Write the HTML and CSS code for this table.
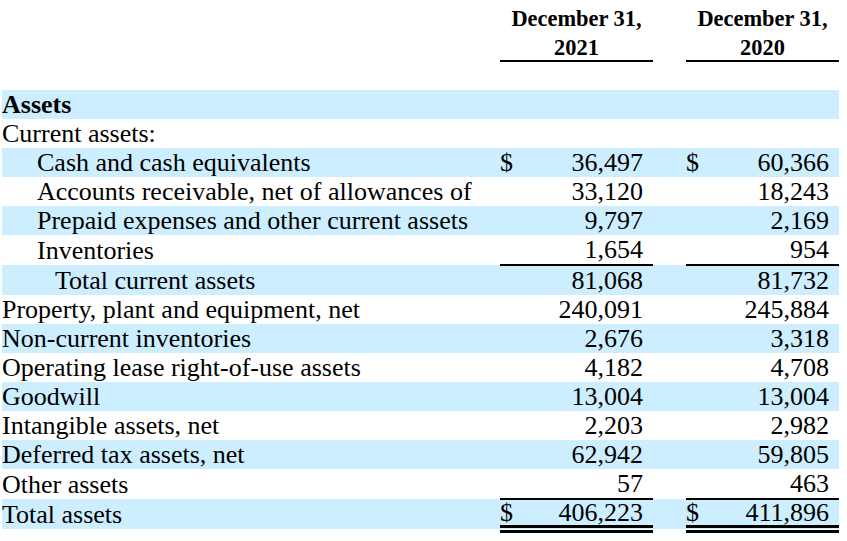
FILE: index.html
```html
<!DOCTYPE html>
<html>
<head>
<meta charset="utf-8">
<link rel="stylesheet" href="styles.css">
</head>
<body>
<table class="bs">
  <colgroup>
    <col class="c-label">
    <col class="c-cur">
    <col class="c-num">
    <col class="c-gap">
    <col class="c-cur">
    <col class="c-num">
  </colgroup>
  <thead>
    <tr class="hd">
      <th></th>
      <th colspan="2" class="hcell"><div>December 31,</div><div class="yr">2021</div></th>
      <th></th>
      <th colspan="2" class="hcell"><div>December 31,</div><div class="yr">2020</div></th>
    </tr>
  </thead>
  <tbody>
    <tr class="blue"><td class="b">Assets</td><td></td><td></td><td></td><td></td><td></td></tr>
    <tr><td>Current assets:</td><td></td><td></td><td></td><td></td><td></td></tr>
    <tr class="blue"><td class="i1">Cash and cash equivalents</td><td class="cur">$</td><td class="num">36,497</td><td></td><td class="cur">$</td><td class="num">60,366</td></tr>
    <tr><td class="i1">Accounts receivable, net of allowances of</td><td></td><td class="num">33,120</td><td></td><td></td><td class="num">18,243</td></tr>
    <tr class="blue"><td class="i1">Prepaid expenses and other current assets</td><td></td><td class="num">9,797</td><td></td><td></td><td class="num">2,169</td></tr>
    <tr class="ul"><td class="i1">Inventories</td><td class="cur"></td><td class="num">1,654</td><td></td><td class="cur"></td><td class="num">954</td></tr>
    <tr class="blue"><td class="i2">Total current assets</td><td></td><td class="num">81,068</td><td></td><td></td><td class="num">81,732</td></tr>
    <tr><td>Property, plant and equipment, net</td><td></td><td class="num">240,091</td><td></td><td></td><td class="num">245,884</td></tr>
    <tr class="blue"><td>Non-current inventories</td><td></td><td class="num">2,676</td><td></td><td></td><td class="num">3,318</td></tr>
    <tr><td>Operating lease right-of-use assets</td><td></td><td class="num">4,182</td><td></td><td></td><td class="num">4,708</td></tr>
    <tr class="blue"><td>Goodwill</td><td></td><td class="num">13,004</td><td></td><td></td><td class="num">13,004</td></tr>
    <tr><td>Intangible assets, net</td><td></td><td class="num">2,203</td><td></td><td></td><td class="num">2,982</td></tr>
    <tr class="blue"><td>Deferred tax assets, net</td><td></td><td class="num">62,942</td><td></td><td></td><td class="num">59,805</td></tr>
    <tr class="ul"><td>Other assets</td><td class="cur"></td><td class="num">57</td><td></td><td class="cur"></td><td class="num">463</td></tr>
    <tr class="blue dbl"><td>Total assets</td><td class="cur">$</td><td class="num">406,223</td><td></td><td class="cur">$</td><td class="num">411,896</td></tr>
  </tbody>
</table>
</body>
</html>
```
FILE: styles.css
```css
html, body {
  margin: 0;
  padding: 0;
  background: #ffffff;
}
body {
  padding: 0 0 0 2px;
  font-family: "Liberation Serif", "Times New Roman", serif;
  color: #000;
}
.bs {
  border-collapse: collapse;
  border-spacing: 0;
  table-layout: fixed;
  width: 837px;
  font-size: 26px;
}
.c-label { width: 498px; }
.c-cur { width: 30px; }
.c-num { width: 123px; }
.c-gap { width: 33px; }
.bs td {
  padding: 0;
  height: 29px;
  line-height: 29px;
  white-space: nowrap;
  vertical-align: middle;
}
.bs td.num { text-align: right; padding-right: 10px; }
.bs td.cur { text-align: left; }
.bs td.b { font-weight: bold; }
.bs td.i1 { padding-left: 35px; }
.bs td.i2 { padding-left: 53px; }
.blue td { background: #cceeff; }
.hd th {
  padding: 0;
  height: 90px;
  vertical-align: top;
  font-size: 22.4px;
  font-weight: bold;
}
.hcell {
  text-align: center;
}
.hcell > div {
  line-height: 29px;
  padding-top: 4px;
}
.hcell > div.yr {
  padding-top: 2px;
  border-bottom: 2px solid #000;
  line-height: 25px;
}
.ul td.cur, .ul td.num { border-bottom: 2px solid #000; }
.bs .dbl td { height: 25px; line-height: 25px; }
.dbl td.cur, .dbl td.num { border-bottom: 8px double #000; }
```
